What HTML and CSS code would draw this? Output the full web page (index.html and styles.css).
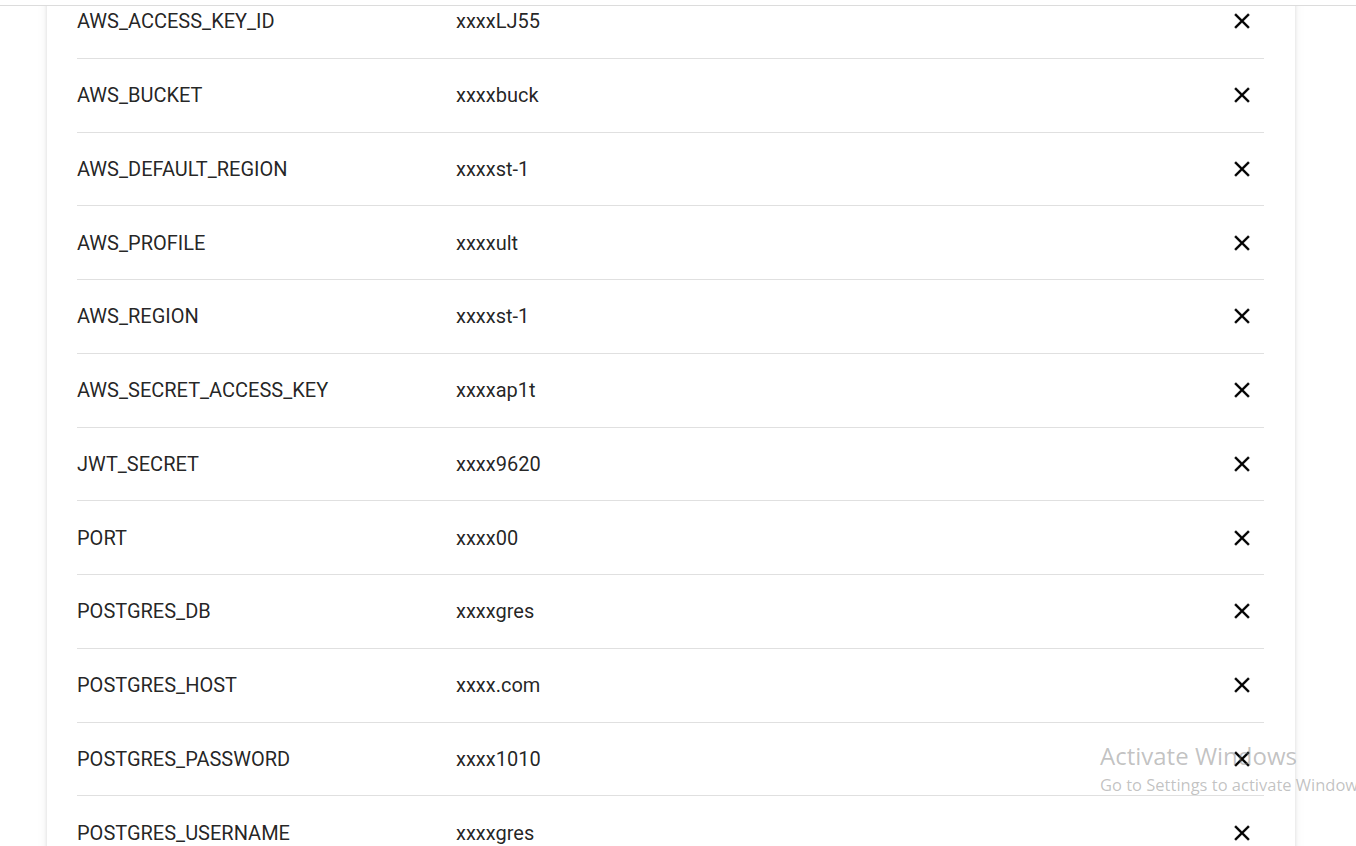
FILE: index.html
```html
<!DOCTYPE html>
<html>
<head>
<meta charset="utf-8">
<link rel="stylesheet" href="styles.css">
</head>
<body>
<div class="topbar"></div>
<div class="card">
  <div class="table">
    <div class="row"><div class="name">AWS_ACCESS_KEY_ID</div><div class="value">xxxxLJ55</div><div class="action"><svg viewBox="0 0 24 24" class="close"><path d="M19 6.41L17.59 5 12 10.59 6.41 5 5 6.41 10.59 12 5 17.59 6.41 19 12 13.41 17.59 19 19 17.59 13.41 12z"/></svg></div></div>
    <div class="row"><div class="name">AWS_BUCKET</div><div class="value">xxxxbuck</div><div class="action"><svg viewBox="0 0 24 24" class="close"><path d="M19 6.41L17.59 5 12 10.59 6.41 5 5 6.41 10.59 12 5 17.59 6.41 19 12 13.41 17.59 19 19 17.59 13.41 12z"/></svg></div></div>
    <div class="row"><div class="name">AWS_DEFAULT_REGION</div><div class="value">xxxxst-1</div><div class="action"><svg viewBox="0 0 24 24" class="close"><path d="M19 6.41L17.59 5 12 10.59 6.41 5 5 6.41 10.59 12 5 17.59 6.41 19 12 13.41 17.59 19 19 17.59 13.41 12z"/></svg></div></div>
    <div class="row"><div class="name">AWS_PROFILE</div><div class="value">xxxxult</div><div class="action"><svg viewBox="0 0 24 24" class="close"><path d="M19 6.41L17.59 5 12 10.59 6.41 5 5 6.41 10.59 12 5 17.59 6.41 19 12 13.41 17.59 19 19 17.59 13.41 12z"/></svg></div></div>
    <div class="row"><div class="name">AWS_REGION</div><div class="value">xxxxst-1</div><div class="action"><svg viewBox="0 0 24 24" class="close"><path d="M19 6.41L17.59 5 12 10.59 6.41 5 5 6.41 10.59 12 5 17.59 6.41 19 12 13.41 17.59 19 19 17.59 13.41 12z"/></svg></div></div>
    <div class="row"><div class="name">AWS_SECRET_ACCESS_KEY</div><div class="value">xxxxap1t</div><div class="action"><svg viewBox="0 0 24 24" class="close"><path d="M19 6.41L17.59 5 12 10.59 6.41 5 5 6.41 10.59 12 5 17.59 6.41 19 12 13.41 17.59 19 19 17.59 13.41 12z"/></svg></div></div>
    <div class="row"><div class="name">JWT_SECRET</div><div class="value">xxxx9620</div><div class="action"><svg viewBox="0 0 24 24" class="close"><path d="M19 6.41L17.59 5 12 10.59 6.41 5 5 6.41 10.59 12 5 17.59 6.41 19 12 13.41 17.59 19 19 17.59 13.41 12z"/></svg></div></div>
    <div class="row"><div class="name">PORT</div><div class="value">xxxx00</div><div class="action"><svg viewBox="0 0 24 24" class="close"><path d="M19 6.41L17.59 5 12 10.59 6.41 5 5 6.41 10.59 12 5 17.59 6.41 19 12 13.41 17.59 19 19 17.59 13.41 12z"/></svg></div></div>
    <div class="row"><div class="name">POSTGRES_DB</div><div class="value">xxxxgres</div><div class="action"><svg viewBox="0 0 24 24" class="close"><path d="M19 6.41L17.59 5 12 10.59 6.41 5 5 6.41 10.59 12 5 17.59 6.41 19 12 13.41 17.59 19 19 17.59 13.41 12z"/></svg></div></div>
    <div class="row"><div class="name">POSTGRES_HOST</div><div class="value">xxxx.com</div><div class="action"><svg viewBox="0 0 24 24" class="close"><path d="M19 6.41L17.59 5 12 10.59 6.41 5 5 6.41 10.59 12 5 17.59 6.41 19 12 13.41 17.59 19 19 17.59 13.41 12z"/></svg></div></div>
    <div class="row"><div class="name">POSTGRES_PASSWORD</div><div class="value">xxxx1010</div><div class="action"><svg viewBox="0 0 24 24" class="close"><path d="M19 6.41L17.59 5 12 10.59 6.41 5 5 6.41 10.59 12 5 17.59 6.41 19 12 13.41 17.59 19 19 17.59 13.41 12z"/></svg></div></div>
    <div class="row"><div class="name">POSTGRES_USERNAME</div><div class="value">xxxxgres</div><div class="action"><svg viewBox="0 0 24 24" class="close"><path d="M19 6.41L17.59 5 12 10.59 6.41 5 5 6.41 10.59 12 5 17.59 6.41 19 12 13.41 17.59 19 19 17.59 13.41 12z"/></svg></div></div>
  </div>
</div>
<div class="watermark">
  <div class="wm-title">Activate Windows</div>
  <div class="wm-sub">Go to Settings to activate Windows.</div>
</div>
</body>
</html>
```
FILE: styles.css
```css
html, body {
  margin: 0;
  padding: 0;
  background: #ffffff;
  overflow: hidden;
  height: 846px;
}
body {
  font-family: Roboto, "Liberation Sans", sans-serif;
  color: rgba(0, 0, 0, 0.87);
}
.topbar {
  position: relative;
  z-index: 2;
  height: 5px;
  background: #ffffff;
  border-bottom: 1px solid #dcdcdc;
}
.card {
  margin-left: 47px;
  width: 1248px;
  margin-top: -21px;
  background: #ffffff;
  box-shadow: 0 0 4px rgba(0, 0, 0, 0.12), 0 0 12px rgba(0, 0, 0, 0.05);
  padding: 0 31px 0 30px;
  box-sizing: border-box;
  height: 1000px;
}
.row {
  display: flex;
  align-items: center;
  height: 73.75px;
  box-sizing: border-box;
  border-bottom: 1px solid #e0e0e0;
  font-size: 20px;
}
.name {
  width: 379px;
  flex: none;
}
.value {
  flex: 1;
}
.action {
  width: 35px;
  display: flex;
  justify-content: flex-start;
  flex: none;
}
.close {
  width: 26px;
  height: 26px;
  fill: #000000;
  stroke: #000000;
  stroke-width: 0.25;
}
.watermark {
  position: absolute;
  left: 1100px;
  top: 740px;
  white-space: nowrap;
  color: rgba(120, 120, 120, 0.45);
  font-family: "Open Sans", "Noto Sans", sans-serif;
  z-index: 3;
}
.wm-title {
  font-size: 24px;
  line-height: 32px;
}
.wm-sub {
  font-size: 16.5px;
  line-height: 26px;
}
```
